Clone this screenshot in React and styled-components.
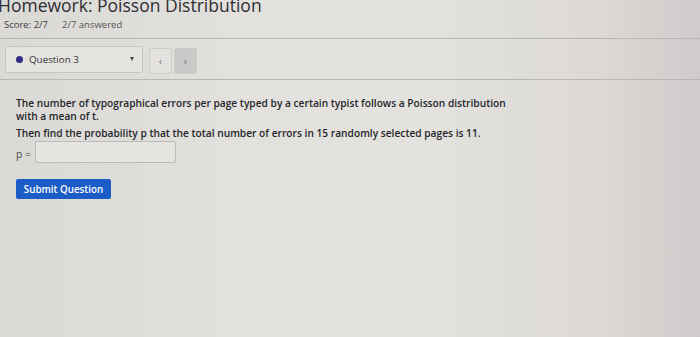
import React from "react";
import styled, { createGlobalStyle } from "styled-components";

const Global = createGlobalStyle`
  html, body { margin: 0; padding: 0; }
  body {
    width: 700px;
    height: 337px;
    overflow: hidden;
    font-family: "Open Sans", "Liberation Sans", sans-serif;
    background: linear-gradient(90deg, #dbd9d5 0%, #e2e1dd 35%, #e3e2de 60%, #dcd9d7 85%, #cfcbca 100%);
  }
`;

const Page = styled.div`
  width: 700px;
  height: 337px;
  overflow: hidden;
  display: flex;
  flex-direction: column;
`;

const Title = styled.h1`
  margin: -7px 0 0 -2px;
  font-size: 17.5px;
  font-weight: 400;
  color: #2f2f33;
  line-height: 24px;
  white-space: nowrap;
`;

const ScoreRow = styled.div`
  display: flex;
  gap: 14px;
  padding-left: 4px;
  margin-top: 2px;
  font-size: 9.5px;
  color: #3a3a3a;
  line-height: 12px;
`;

const Muted = styled.span`
  color: #555;
`;

const NavBar = styled.div`
  margin-top: 7px;
  border-top: 1px solid #b9b7b6;
  border-bottom: 1px solid #b9b7b6;
  height: 40px;
  display: flex;
  align-items: center;
  gap: 6px;
  padding-left: 5px;
`;

const Select = styled.div`
  width: 138px;
  height: 27px;
  border: 1px solid #c8c6c4;
  border-radius: 2px;
  background: #e4e3e0;
  display: flex;
  align-items: center;
  padding: 0 8px 0 10px;
  box-sizing: border-box;
  font-size: 9.8px;
  color: #333;
`;

const Dot = styled.span`
  width: 7px;
  height: 7px;
  border-radius: 50%;
  background: #2f2b86;
  margin-right: 6px;
`;

const Caret = styled.span`
  margin-left: auto;
  width: 0;
  height: 0;
  border-left: 2.5px solid transparent;
  border-right: 2.5px solid transparent;
  border-top: 4px solid #444;
`;

const NavGroup = styled.div`
  display: flex;
  gap: 2px;
  margin-top: 3px;
`;

const NavBtn = styled.div`
  width: 23px;
  height: 26px;
  border: 1px solid #cfcdcb;
  border-radius: 2px;
  box-sizing: border-box;
  background: ${(p) => (p.$active ? "#cbc9c7" : "#e3e2df")};
  display: flex;
  align-items: center;
  justify-content: center;
  font-size: 11px;
  color: #777;
`;

const Content = styled.div`
  padding: 17px 0 0 16px;
  font-size: 10.2px;
  font-weight: 600;
  color: #26262a;
  line-height: 13px;
`;

const Para = styled.p`
  margin: 0;
`;

const Second = styled.p`
  margin: 4px 0 0;
`;

const AnswerRow = styled.div`
  display: flex;
  align-items: center;
  gap: 4px;
  margin-top: 1px;
`;

const Label = styled.span`
  font-weight: 400;
  color: #444;
  margin-top: 4px;
`;

const Input = styled.div`
  width: 141px;
  height: 22px;
  border: 1px solid #bdbbb9;
  border-radius: 2px;
  background: #e6e5e2;
  box-sizing: border-box;
`;

const Submit = styled.button`
  margin-top: 16px;
  width: 95px;
  height: 20px;
  border: none;
  border-radius: 2px;
  background: #1c5cc7;
  color: #fff;
  font-family: "Open Sans", "Liberation Sans", sans-serif;
  font-size: 9.8px;
  font-weight: 600;
  padding: 0;
`;

export default function App() {
  return (
    <>
      <Global />
      <Page>
        <Title>Homework: Poisson Distribution</Title>
        <ScoreRow>
          <span>Score: 2/7</span>
          <Muted>2/7 answered</Muted>
        </ScoreRow>
        <NavBar>
          <Select>
            <Dot />
            Question 3
            <Caret />
          </Select>
          <NavGroup>
            <NavBtn>&lsaquo;</NavBtn>
            <NavBtn $active>&rsaquo;</NavBtn>
          </NavGroup>
        </NavBar>
        <Content>
          <Para>
            The number of typographical errors per page typed by a certain typist follows a Poisson distribution
            <br />
            with a mean of t.
          </Para>
          <Second>
            Then find the probability p that the total number of errors in 15 randomly selected pages is 11.
          </Second>
          <AnswerRow>
            <Label>p =</Label>
            <Input />
          </AnswerRow>
          <Submit>Submit Question</Submit>
        </Content>
      </Page>
    </>
  );
}
